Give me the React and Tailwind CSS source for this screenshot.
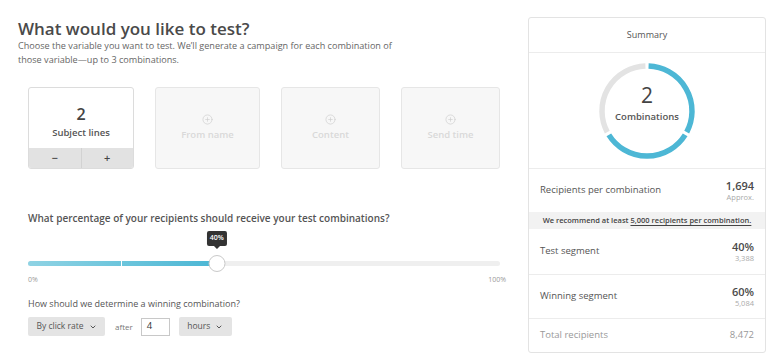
import React from 'react';
import { ChevronDown, CirclePlus } from 'lucide-react';

// point on the ring, angle measured clockwise from 12 o'clock
const pt = (deg, r, c) => {
    const a = (deg * Math.PI) / 180;
    return [c + r * Math.sin(a), c - r * Math.cos(a)];
};

const arc = (from, to, r = 45, c = 50) => {
    const [x1, y1] = pt(from, r, c);
    const [x2, y2] = pt(to, r, c);
    const large = to - from > 180 ? 1 : 0;
    return `M ${x1} ${y1} A ${r} ${r} 0 ${large} 1 ${x2} ${y2}`;
};

const VariableCard = ({ label, width }) => (
    <div
        className={`${width} h-[82px] rounded-[3px] border border-[#e6e6e6] bg-[#f7f7f7] flex flex-col items-center justify-center`}
    >
        <CirclePlus className="w-[11px] h-[11px] text-[#cfcfcf]" strokeWidth={1.5} />
        <span className="mt-[3px] text-[9.5px] font-semibold text-[#d9d9d9]">{label}</span>
    </div>
);

const SummaryRow = ({ label, value, sub, className = '' }) => (
    <div className={`flex items-center justify-between px-[11px] border-b border-[#ececec] ${className}`}>
        <span className="text-[9.5px] text-[#555]">{label}</span>
        <div className="flex flex-col items-end">
            <span className="text-[11px] font-semibold text-[#4a4a4a] leading-[13px]">{value}</span>
            <span className="text-[7.5px] text-[#aaa] leading-[11px]">{sub}</span>
        </div>
    </div>
);

const App = () => {
    return (
        <div className="w-[768px] h-[356px] bg-white flex font-['Open_Sans',sans-serif] text-[#555]">
            {/* Left: test setup */}
            <div className="flex-1 pl-[18px] pt-[19px]">
                <h1 className="text-[17px] leading-[20px] font-semibold text-[#4a4a4a]">What would you like to test?</h1>
                <p className="text-[9.1px] leading-[14px] text-[#666] w-[395px]">
                    Choose the variable you want to test. We’ll generate a campaign for each combination of those variable—up to 3 combinations.
                </p>

                <div className="ml-[10px] mt-[20px] flex gap-[21px]">
                    <div className="w-[106px] h-[82px] rounded-[3px] border border-[#dcdcdc] overflow-hidden flex flex-col bg-white">
                        <div className="flex-1 flex flex-col items-center justify-center pt-[10px]">
                            <span className="text-[16px] leading-[18px] font-semibold text-[#444]">2</span>
                            <span className="text-[9.5px] font-semibold text-[#555] mt-[3px]">Subject lines</span>
                        </div>
                        <div className="h-[20px] flex bg-[#e2e2e2] text-[#444] text-[11px] font-semibold">
                            <button className="flex-1 flex items-center justify-center border-r border-[#d2d2d2]">−</button>
                            <button className="flex-1 flex items-center justify-center">+</button>
                        </div>
                    </div>
                    <VariableCard label="From name" width="w-[105px]" />
                    <VariableCard label="Content" width="w-[99px]" />
                    <VariableCard label="Send time" width="w-[99px]" />
                </div>

                <p className="ml-[10px] mt-[42px] text-[10px] leading-[14px] font-semibold text-[#555]">
                    What percentage of your recipients should receive your test combinations?
                </p>

                {/* Slider */}
                <div className="ml-[10px] mt-[30px] w-[472px] h-[17px] relative flex items-center">
                    <div className="w-full h-[5px] rounded-full bg-[#efefef] overflow-hidden flex">
                        <div className="w-[20%] h-full bg-gradient-to-r from-[#8fd3e4] to-[#6cc5dc] border-r border-white" />
                        <div className="w-[20%] h-full bg-gradient-to-r from-[#6cc5dc] to-[#4ab6d4]" />
                    </div>
                    <div className="absolute left-[40%] top-0 -translate-x-1/2 w-[17px] h-[17px] rounded-full bg-white border border-[#c9c9c9]" />
                    <div className="absolute left-[40%] bottom-[23px] -translate-x-1/2 flex flex-col items-center">
                        <div className="bg-[#333] text-white text-[7px] font-semibold px-[3px] h-[15px] flex items-center rounded-[2px]">40%</div>
                        <div className="w-0 h-0 border-l-[3px] border-r-[3px] border-t-[3px] border-l-transparent border-r-transparent border-t-[#333]" />
                    </div>
                </div>
                <div className="ml-[10px] mt-[3px] w-[478px] flex justify-between text-[7px] leading-[10px] text-[#999]">
                    <span>0%</span>
                    <span>100%</span>
                </div>

                <p className="ml-[10px] mt-[12px] text-[9px] leading-[14px] text-[#555]">
                    How should we determine a winning combination?
                </p>
                <div className="ml-[10px] mt-[6px] flex items-center text-[8.5px]">
                    <button className="w-[77px] h-[19px] bg-[#e4e4e4] rounded-[2px] flex items-center justify-center gap-[5px] text-[#555]">
                        By click rate
                        <ChevronDown className="w-[8px] h-[8px]" strokeWidth={3} />
                    </button>
                    <span className="ml-[10px] text-[8px] text-[#777]">after</span>
                    <div className="ml-[8px] w-[29px] h-[18px] border border-[#c8c8c8] bg-white flex items-center px-[5px] text-[9.5px] text-[#333]">4</div>
                    <button className="ml-[9px] w-[53px] h-[19px] bg-[#e4e4e4] rounded-[2px] flex items-center justify-center gap-[5px] text-[#555]">
                        hours
                        <ChevronDown className="w-[8px] h-[8px]" strokeWidth={3} />
                    </button>
                </div>
            </div>

            {/* Right: summary */}
            <aside className="mt-[17px] mr-[2px] w-[238px] h-[336px] rounded-[3px] border border-[#e3e3e3] flex flex-col overflow-hidden">
                <div className="h-[35px] flex items-center justify-center border-b border-[#ececec] text-[9px] text-[#555]">Summary</div>
                <div className="h-[116px] flex items-center justify-center border-b border-[#ececec]">
                    <div className="relative w-[100px] h-[100px]">
                        <svg viewBox="0 0 100 100" className="absolute inset-0 w-full h-full">
                            <path d={arc(2, 118)} fill="none" stroke="#4db7d5" strokeWidth="5.5" />
                            <path d={arc(122, 238)} fill="none" stroke="#4db7d5" strokeWidth="5.5" />
                            <path d={arc(242, 358)} fill="none" stroke="#e3e3e3" strokeWidth="5.5" />
                        </svg>
                        <div className="absolute inset-0 flex flex-col items-center justify-center pb-[14px]">
                            <span className="text-[21px] leading-[24px] font-medium text-[#444]">2</span>
                            <span className="text-[9.5px] font-semibold text-[#555] mt-[3px]">Combinations</span>
                        </div>
                    </div>
                </div>
                <SummaryRow label="Recipients per combination" value="1,694" sub="Approx." className="h-[43px] border-b-0" />
                <div className="h-[17px] bg-[#f2f2f2] flex items-center justify-center text-[7.5px] font-semibold text-[#444]">
                    We recommend at least&nbsp;<span className="underline underline-offset-2">5,000 recipients per combination.</span>
                </div>
                <SummaryRow label="Test segment" value="40%" sub="3,388" className="h-[46px]" />
                <SummaryRow label="Winning segment" value="60%" sub="5,084" className="h-[44px]" />
                <div className="flex-1 flex items-center justify-between px-[11px] text-[9.5px] text-[#999]">
                    <span>Total recipients</span>
                    <span>8,472</span>
                </div>
            </aside>
        </div>
    );
};

export default App;
